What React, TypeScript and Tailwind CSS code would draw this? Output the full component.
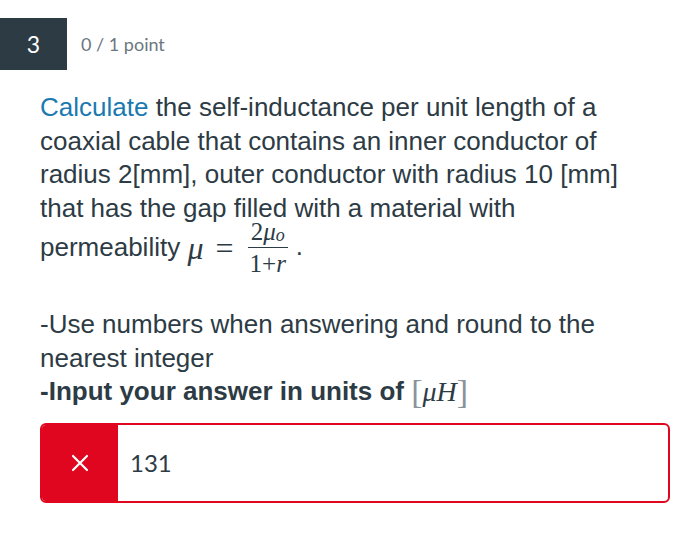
import React from 'react';

const sans = { fontFamily: '"Liberation Sans", Arial, sans-serif' };
const serif = { fontFamily: '"Liberation Serif", "Times New Roman", serif' };

function Fraction() {
  return (
    <span className="inline-flex flex-col items-center ml-[14px] mr-[8px] relative -top-[1px]" style={serif}>
      <span className="text-[25px] leading-[27px] px-[2px]">
        2<i>μ</i><sub className="text-[18px] italic relative -bottom-[1px]">o</sub>
      </span>
      <span className="block w-full h-[1px] bg-[#2d3b45] my-[2px]" />
      <span className="text-[25px] leading-[27px] px-[2px]">
        1+<i>r</i>
      </span>
    </span>
  );
}

export default function App() {
  return (
    <div className="w-[700px] h-[533px] bg-white overflow-hidden">
      <div className="flex items-center pt-[18px]">
        <div className="w-[67px] h-[52px] bg-[#2d3b45] flex items-center justify-center text-white text-[23px]" style={{ fontFamily: 'Lato, sans-serif' }}>
          3
        </div>
        <div className="ml-[14px] text-[18px] text-[#6b7780]" style={{ fontFamily: 'Lato, sans-serif' }}>
          0 / 1 point
        </div>
      </div>

      <div className="px-[40px] pt-[21px] text-[#2d3b45] text-[26px] leading-[33.5px]" style={sans}>
        <p>
          <span className="text-[#1a7ab0]">Calculate</span> the self-inductance per unit length of a coaxial cable that contains an inner conductor of radius 2[mm], outer conductor with radius 10 [mm] that has the gap filled with a material with
        </p>
        <p className="flex items-center h-[46px]">
          <span>permeability&nbsp;</span>
          <span className="text-[32px] leading-none" style={serif}>
            <i>μ</i>
            <span className="ml-[12px]">=</span>
          </span>
          <Fraction />
          <span className="relative -top-[1px]">.</span>
        </p>
        <p className="mt-[37px]">-Use numbers when answering and round to the nearest integer</p>
        <p className="font-bold flex items-center h-[33.5px]">
          <span>-Input your answer in units of&nbsp;</span>
          <span className="font-normal text-[28px] leading-none flex items-center" style={serif}>
            <span className="text-[34px] leading-none text-[#8a939a] font-light">[</span>
            <i>μH</i>
            <span className="text-[34px] leading-none text-[#8a939a] font-light">]</span>
          </span>
        </p>
      </div>

      <div className="mx-[40px] mt-[14px] h-[80px] w-[630px] border-2 border-[#e0061f] rounded-[6px] flex overflow-hidden">
        <div className="w-[76px] bg-[#e0061f] flex items-center justify-center">
          <svg width="18" height="18" viewBox="0 0 18 18" fill="none" stroke="white" strokeWidth="2.2" strokeLinecap="round">
            <path d="M2 2 L16 16 M16 2 L2 16" />
          </svg>
        </div>
        <div className="flex-1 flex items-center pl-[12px] text-[24px] text-[#2d3b45]" style={{ fontFamily: 'Lato, sans-serif' }}>
          131
        </div>
      </div>
    </div>
  );
}
